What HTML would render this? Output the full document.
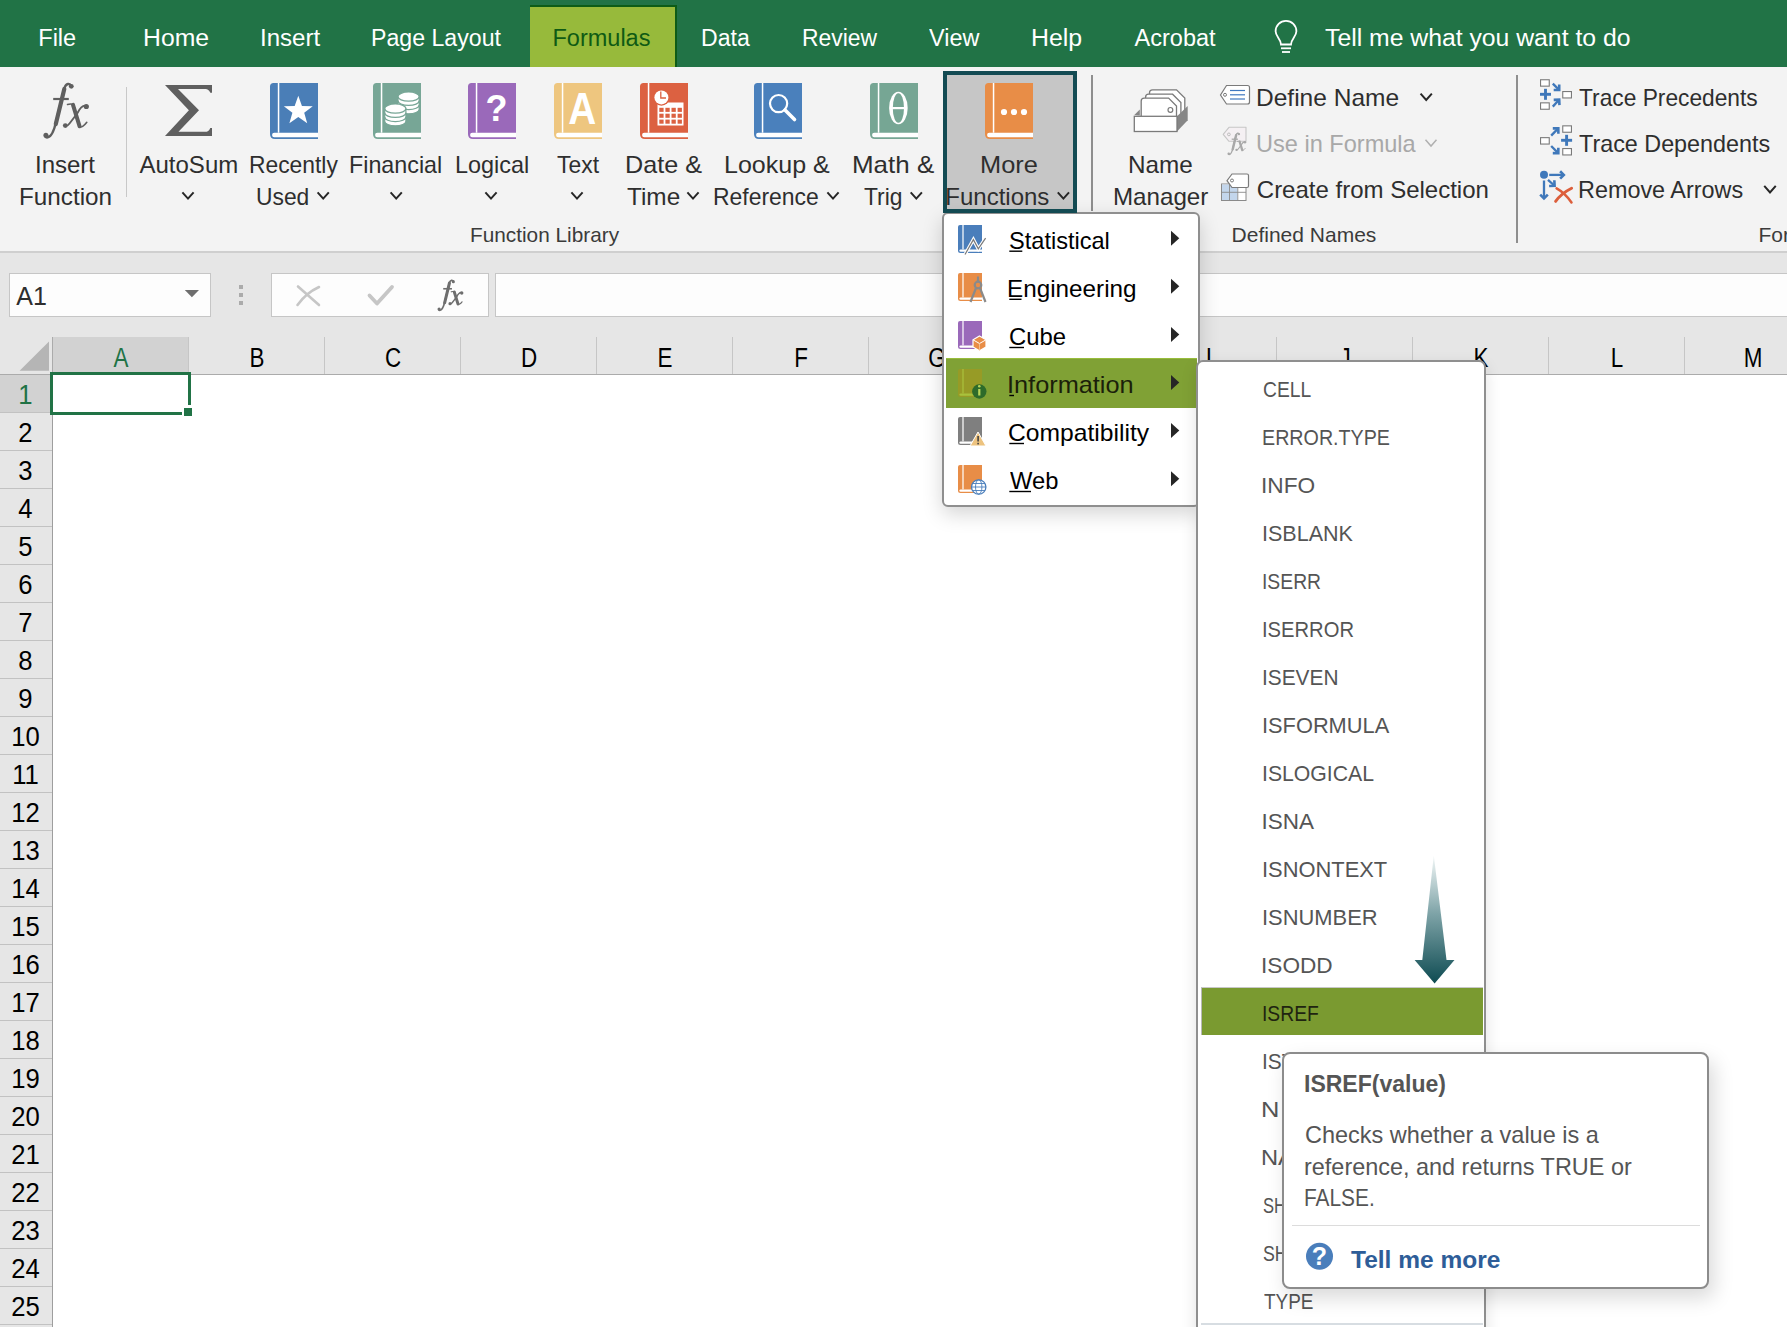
<!DOCTYPE html>
<html><head><meta charset="utf-8"><style>
html,body{margin:0;padding:0;}
body{width:1787px;height:1327px;overflow:hidden;position:relative;background:#fff;font-family:"Liberation Sans",sans-serif;}
.t{position:absolute;white-space:nowrap;line-height:1;transform-origin:0 0;}
.b{position:absolute;}
svg{position:absolute;left:0;top:0;}
</style></head><body>

<div class="b" style="left:0px;top:0px;width:1787px;height:67px;background:#217346;z-index:0;"></div>
<div class="b" style="left:530px;top:5px;width:147px;height:62px;background:#97BA3B;z-index:0;"></div>
<div class="b" style="left:530px;top:5px;width:147px;height:2px;background:#0D5C17;z-index:0;"></div>
<div class="b" style="left:675px;top:5px;width:2px;height:62px;background:#0D5C17;z-index:0;"></div>
<div class="b" style="left:0px;top:67px;width:1787px;height:184px;background:#F3F3F3;z-index:0;"></div>
<div class="b" style="left:0px;top:251px;width:1787px;height:2px;background:#CFCFCF;z-index:0;"></div>
<div class="b" style="left:0px;top:253px;width:1787px;height:121px;background:#E6E6E6;z-index:0;"></div>
<div class="b" style="left:943px;top:71px;width:134px;height:142px;background:#C6C6C6;border:4px solid #134B53;box-sizing:border-box;z-index:0;"></div>
<div class="b" style="left:943px;top:209px;width:134px;height:4px;background:#134B53;z-index:25;"></div>
<div class="b" style="left:125.5px;top:87px;width:1.5px;height:110px;background:#C8C8C8;z-index:0;"></div>
<div class="b" style="left:1091px;top:75px;width:2px;height:136px;background:#8E8E8E;z-index:0;"></div>
<div class="b" style="left:1515.5px;top:75px;width:2px;height:168px;background:#8E8E8E;z-index:0;"></div>
<div class="b" style="left:9px;top:273px;width:202px;height:44px;background:#FDFDFD;border:1px solid #C6C6C6;box-sizing:border-box;z-index:0;"></div>
<div class="b" style="left:271px;top:273px;width:218px;height:44px;background:#FDFDFD;border:1px solid #C6C6C6;box-sizing:border-box;z-index:0;"></div>
<div class="b" style="left:495px;top:273px;width:1294px;height:44px;background:#FDFDFD;border:1px solid #C6C6C6;box-sizing:border-box;z-index:0;"></div>
<div class="b" style="left:239px;top:285px;width:4px;height:4px;background:#ABABAB;z-index:0;"></div>
<div class="b" style="left:239px;top:293px;width:4px;height:4px;background:#ABABAB;z-index:0;"></div>
<div class="b" style="left:239px;top:301px;width:4px;height:4px;background:#ABABAB;z-index:0;"></div>
<div class="b" style="left:52px;top:337px;width:137px;height:37px;background:#D2D2D2;z-index:0;"></div>
<div class="b" style="left:0px;top:374px;width:1787px;height:1px;background:#ABABAB;z-index:0;"></div>
<div class="b" style="left:188px;top:337px;width:1px;height:37px;background:#C6C6C6;z-index:0;"></div>
<div class="b" style="left:324px;top:337px;width:1px;height:37px;background:#C6C6C6;z-index:0;"></div>
<div class="b" style="left:460px;top:337px;width:1px;height:37px;background:#C6C6C6;z-index:0;"></div>
<div class="b" style="left:596px;top:337px;width:1px;height:37px;background:#C6C6C6;z-index:0;"></div>
<div class="b" style="left:732px;top:337px;width:1px;height:37px;background:#C6C6C6;z-index:0;"></div>
<div class="b" style="left:868px;top:337px;width:1px;height:37px;background:#C6C6C6;z-index:0;"></div>
<div class="b" style="left:1004px;top:337px;width:1px;height:37px;background:#C6C6C6;z-index:0;"></div>
<div class="b" style="left:1140px;top:337px;width:1px;height:37px;background:#C6C6C6;z-index:0;"></div>
<div class="b" style="left:1276px;top:337px;width:1px;height:37px;background:#C6C6C6;z-index:0;"></div>
<div class="b" style="left:1412px;top:337px;width:1px;height:37px;background:#C6C6C6;z-index:0;"></div>
<div class="b" style="left:1548px;top:337px;width:1px;height:37px;background:#C6C6C6;z-index:0;"></div>
<div class="b" style="left:1684px;top:337px;width:1px;height:37px;background:#C6C6C6;z-index:0;"></div>
<div class="b" style="left:1820px;top:337px;width:1px;height:37px;background:#C6C6C6;z-index:0;"></div>
<div class="b" style="left:52px;top:337px;width:1px;height:37px;background:#ABABAB;z-index:0;"></div>
<div class="b" style="left:0px;top:375px;width:52px;height:952px;background:#E6E6E6;z-index:0;"></div>
<div class="b" style="left:0px;top:375px;width:52px;height:38px;background:#D2D2D2;z-index:0;"></div>
<div class="b" style="left:52px;top:375px;width:1px;height:952px;background:#9E9E9E;z-index:0;"></div>
<div class="b" style="left:0px;top:412px;width:52px;height:1px;background:#C2C2C2;z-index:0;"></div>
<div class="b" style="left:0px;top:450px;width:52px;height:1px;background:#C2C2C2;z-index:0;"></div>
<div class="b" style="left:0px;top:488px;width:52px;height:1px;background:#C2C2C2;z-index:0;"></div>
<div class="b" style="left:0px;top:526px;width:52px;height:1px;background:#C2C2C2;z-index:0;"></div>
<div class="b" style="left:0px;top:564px;width:52px;height:1px;background:#C2C2C2;z-index:0;"></div>
<div class="b" style="left:0px;top:602px;width:52px;height:1px;background:#C2C2C2;z-index:0;"></div>
<div class="b" style="left:0px;top:640px;width:52px;height:1px;background:#C2C2C2;z-index:0;"></div>
<div class="b" style="left:0px;top:678px;width:52px;height:1px;background:#C2C2C2;z-index:0;"></div>
<div class="b" style="left:0px;top:716px;width:52px;height:1px;background:#C2C2C2;z-index:0;"></div>
<div class="b" style="left:0px;top:754px;width:52px;height:1px;background:#C2C2C2;z-index:0;"></div>
<div class="b" style="left:0px;top:792px;width:52px;height:1px;background:#C2C2C2;z-index:0;"></div>
<div class="b" style="left:0px;top:830px;width:52px;height:1px;background:#C2C2C2;z-index:0;"></div>
<div class="b" style="left:0px;top:868px;width:52px;height:1px;background:#C2C2C2;z-index:0;"></div>
<div class="b" style="left:0px;top:906px;width:52px;height:1px;background:#C2C2C2;z-index:0;"></div>
<div class="b" style="left:0px;top:944px;width:52px;height:1px;background:#C2C2C2;z-index:0;"></div>
<div class="b" style="left:0px;top:982px;width:52px;height:1px;background:#C2C2C2;z-index:0;"></div>
<div class="b" style="left:0px;top:1020px;width:52px;height:1px;background:#C2C2C2;z-index:0;"></div>
<div class="b" style="left:0px;top:1058px;width:52px;height:1px;background:#C2C2C2;z-index:0;"></div>
<div class="b" style="left:0px;top:1096px;width:52px;height:1px;background:#C2C2C2;z-index:0;"></div>
<div class="b" style="left:0px;top:1134px;width:52px;height:1px;background:#C2C2C2;z-index:0;"></div>
<div class="b" style="left:0px;top:1172px;width:52px;height:1px;background:#C2C2C2;z-index:0;"></div>
<div class="b" style="left:0px;top:1210px;width:52px;height:1px;background:#C2C2C2;z-index:0;"></div>
<div class="b" style="left:0px;top:1248px;width:52px;height:1px;background:#C2C2C2;z-index:0;"></div>
<div class="b" style="left:0px;top:1286px;width:52px;height:1px;background:#C2C2C2;z-index:0;"></div>
<div class="b" style="left:0px;top:1324px;width:52px;height:1px;background:#C2C2C2;z-index:0;"></div>
<div class="b" style="left:50px;top:372px;width:141px;height:43px;border:3px solid #217346;box-sizing:border-box;z-index:0;"></div>
<div class="b" style="left:182px;top:405px;width:12px;height:12px;background:#fff;z-index:2;"></div>
<div class="b" style="left:184px;top:407.5px;width:8px;height:8.5px;background:#217346;z-index:3;"></div>
<svg width="1787" height="1327" style="z-index:5"><g fill="none" stroke="#fff" stroke-width="1.8"><path d="M1281,44.5 C1281,39 1275.6,36.5 1275.6,31.3 A10.4,10.4 0 0 1 1296.4,31.3 C1296.4,36.5 1291,39 1291,44.5 Z"/><line x1="1281" y1="48.3" x2="1291" y2="48.3"/><line x1="1282" y1="52" x2="1290" y2="52"/></g><g transform="translate(43,83) scale(1.0)" fill="none" stroke="#5F5F5F" stroke-linecap="round"><path d="M28,3 C27,0 23,0 21.5,5 L13,39 C11,48 8,54.3 4,54.5 C2.5,54.5 1.8,53 2.5,52" stroke-width="2.40"/><path d="M21.3,6 L12.8,41" stroke-width="4.20"/><path d="M10.2,16 L25.8,16" stroke-width="2.20" stroke-linecap="butt"/><path d="M30,21.8 L36.6,43.3" stroke-width="4.00"/><path d="M24.5,21.5 Q28,20.3 31,21.8" stroke-width="1.50"/><path d="M43.5,23 C40,21.5 37,25 34.5,30 L26.5,40.5 C25,42.5 23.5,43.5 22,43" stroke-width="1.90"/><path d="M36.6,43.5 C38,45 41,43 43.8,39.3" stroke-width="1.60"/></g><g transform="translate(43,83) scale(1.0)" fill="#5F5F5F"><circle cx="28.3" cy="3.3" r="2.40"/><circle cx="2.9" cy="52.2" r="2.50"/><circle cx="43.3" cy="23.5" r="2.60"/><circle cx="22.3" cy="42.6" r="2.40"/></g><path d="M165,85 H212 V92.7 H210.3 Q208.5,89.1 205.7,89.1 H178 L199,110.3 L178.5,131.8 H205 Q208.8,131.8 210.3,127.9 H212 V135.9 H165 L188.9,110.3 Z" fill="#5F5F5F"/><path d="M273.5,83 H318 V139 H275 Q270,139 270,134 V86.5 Q270,83 273.5,83 Z" fill="#4A7EB7"/><rect x="277.8" y="83" width="1.5" height="49.7" fill="#fff"/><path d="M274.3,132.7 H318 V137.2 H274.3 A2.25,2.25 0 0 1 274.3,132.7 Z" fill="#fff"/><polygon points="298.30,95.70 301.94,105.88 312.76,106.20 304.20,112.82 307.23,123.20 298.30,117.10 289.37,123.20 292.40,112.82 283.84,106.20 294.66,105.88" fill="#fff"/><path d="M376.5,83 H421 V139 H378 Q373,139 373,134 V86.5 Q373,83 376.5,83 Z" fill="#77A696"/><rect x="380.8" y="83" width="1.5" height="49.7" fill="#fff"/><path d="M377.3,132.7 H421 V137.2 H377.3 A2.25,2.25 0 0 1 377.3,132.7 Z" fill="#fff"/><path d="M398.0,96.6 V109.19999999999999 A10.6,4.6 0 0 0 419.20000000000005,109.19999999999999 V96.6 A10.6,4.6 0 0 0 398.0,96.6 Z" fill="#fff" stroke="#77A696" stroke-width="1.2"/><path d="M398.0,96.6 A10.6,4.6 0 0 0 419.20000000000005,96.6" fill="none" stroke="#77A696" stroke-width="1.3"/><path d="M398.0,100.8 A10.6,4.6 0 0 0 419.20000000000005,100.8" fill="none" stroke="#77A696" stroke-width="1.3"/><path d="M398.0,105.0 A10.6,4.6 0 0 0 419.20000000000005,105.0" fill="none" stroke="#77A696" stroke-width="1.3"/><path d="M384.7,108.6 V121.19999999999999 A10.6,4.6 0 0 0 405.90000000000003,121.19999999999999 V108.6 A10.6,4.6 0 0 0 384.7,108.6 Z" fill="#fff" stroke="#77A696" stroke-width="1.2"/><path d="M384.7,108.6 A10.6,4.6 0 0 0 405.90000000000003,108.6" fill="none" stroke="#77A696" stroke-width="1.3"/><path d="M384.7,112.8 A10.6,4.6 0 0 0 405.90000000000003,112.8" fill="none" stroke="#77A696" stroke-width="1.3"/><path d="M384.7,117.0 A10.6,4.6 0 0 0 405.90000000000003,117.0" fill="none" stroke="#77A696" stroke-width="1.3"/><path d="M471.5,83 H516 V139 H473 Q468,139 468,134 V86.5 Q468,83 471.5,83 Z" fill="#9A69BA"/><rect x="475.8" y="83" width="1.5" height="49.7" fill="#fff"/><path d="M472.3,132.7 H516 V137.2 H472.3 A2.25,2.25 0 0 1 472.3,132.7 Z" fill="#fff"/><text x="496.5" y="121" font-family="Liberation Sans" font-weight="700" font-size="36" fill="#fff" text-anchor="middle">?</text><path d="M557.5,83 H602 V139 H559 Q554,139 554,134 V86.5 Q554,83 557.5,83 Z" fill="#EEC67F"/><rect x="561.8" y="83" width="1.5" height="49.7" fill="#fff"/><path d="M558.3,132.7 H602 V137.2 H558.3 A2.25,2.25 0 0 1 558.3,132.7 Z" fill="#fff"/><text x="582.2" y="123.5" font-family="Liberation Sans" font-weight="700" font-size="44" fill="#fff" text-anchor="middle" textLength="28" lengthAdjust="spacingAndGlyphs">A</text><path d="M643.5,83 H688 V139 H645 Q640,139 640,134 V86.5 Q640,83 643.5,83 Z" fill="#DC6141"/><rect x="647.8" y="83" width="1.5" height="49.7" fill="#fff"/><path d="M644.3,132.7 H688 V137.2 H644.3 A2.25,2.25 0 0 1 644.3,132.7 Z" fill="#fff"/><rect x="657.5" y="102.5" width="26" height="23" fill="#fff"/><rect x="659.3" y="107.8" width="4.3" height="4.1" fill="#DC6141"/><rect x="659.3" y="113.7" width="4.3" height="4.1" fill="#DC6141"/><rect x="659.3" y="119.6" width="4.3" height="4.1" fill="#DC6141"/><rect x="665.4" y="107.8" width="4.3" height="4.1" fill="#DC6141"/><rect x="665.4" y="113.7" width="4.3" height="4.1" fill="#DC6141"/><rect x="665.4" y="119.6" width="4.3" height="4.1" fill="#DC6141"/><rect x="671.5" y="107.8" width="4.3" height="4.1" fill="#DC6141"/><rect x="671.5" y="113.7" width="4.3" height="4.1" fill="#DC6141"/><rect x="671.5" y="119.6" width="4.3" height="4.1" fill="#DC6141"/><rect x="677.5999999999999" y="107.8" width="4.3" height="4.1" fill="#DC6141"/><rect x="677.5999999999999" y="113.7" width="4.3" height="4.1" fill="#DC6141"/><rect x="677.5999999999999" y="119.6" width="4.3" height="4.1" fill="#DC6141"/><circle cx="661.4" cy="97.4" r="8.3" fill="#DC6141"/><circle cx="661.4" cy="97.4" r="7" fill="#fff"/><polyline points="660.8,91.5 660.8,98 666,98" fill="none" stroke="#DC6141" stroke-width="1.3"/><path d="M757.5,83 H802 V139 H759 Q754,139 754,134 V86.5 Q754,83 757.5,83 Z" fill="#4A80BC"/><rect x="761.8" y="83" width="1.5" height="49.7" fill="#fff"/><path d="M758.3,132.7 H802 V137.2 H758.3 A2.25,2.25 0 0 1 758.3,132.7 Z" fill="#fff"/><circle cx="778.6" cy="103.6" r="8.6" fill="none" stroke="#fff" stroke-width="2.2"/><line x1="785" y1="110" x2="794.5" y2="119.5" stroke="#fff" stroke-width="3.6" stroke-linecap="round"/><path d="M873.5,83 H918 V139 H875 Q870,139 870,134 V86.5 Q870,83 873.5,83 Z" fill="#76A694"/><rect x="877.8" y="83" width="1.5" height="49.7" fill="#fff"/><path d="M874.3,132.7 H918 V137.2 H874.3 A2.25,2.25 0 0 1 874.3,132.7 Z" fill="#fff"/><ellipse cx="898.4" cy="108" rx="9.3" ry="16.3" fill="#fff"/><ellipse cx="898.4" cy="108" rx="5.6" ry="14.8" fill="#76A694"/><rect x="892" y="107" width="13" height="2.2" fill="#fff"/><path d="M988.5,83 H1033 V139 H990 Q985,139 985,134 V86.5 Q985,83 988.5,83 Z" fill="#E88D47"/><rect x="992.8" y="83" width="1.5" height="49.7" fill="#fff"/><path d="M989.3,132.7 H1033 V137.2 H989.3 A2.25,2.25 0 0 1 989.3,132.7 Z" fill="#fff"/><circle cx="1004" cy="112" r="3.1" fill="#fff"/><circle cx="1014" cy="112" r="3.1" fill="#fff"/><circle cx="1024" cy="112" r="3.1" fill="#fff"/><polyline points="182.4,192.4 188,198.6 193.6,192.4" fill="none" stroke="#262626" stroke-width="2.0"/><polyline points="317.59999999999997,192.4 323.2,198.6 328.8,192.4" fill="none" stroke="#262626" stroke-width="2.0"/><polyline points="390.59999999999997,192.4 396.2,198.6 401.8,192.4" fill="none" stroke="#262626" stroke-width="2.0"/><polyline points="485.4,192.4 491,198.6 496.6,192.4" fill="none" stroke="#262626" stroke-width="2.0"/><polyline points="571.4,192.4 577,198.6 582.6,192.4" fill="none" stroke="#262626" stroke-width="2.0"/><polyline points="687.4,192.4 693,198.6 698.6,192.4" fill="none" stroke="#262626" stroke-width="2.0"/><polyline points="827.4,192.4 833,198.6 838.6,192.4" fill="none" stroke="#262626" stroke-width="2.0"/><polyline points="910.6999999999999,192.4 916.3,198.6 921.9,192.4" fill="none" stroke="#262626" stroke-width="2.0"/><polyline points="1057.8000000000002,192.4 1063.4,198.6 1069.0,192.4" fill="none" stroke="#262626" stroke-width="2.0"/><polyline points="1420.55,93.7 1426.2,99.89999999999999 1431.8500000000001,93.7" fill="none" stroke="#262626" stroke-width="2.0"/><polyline points="1425.5,139.8 1431,146.0 1436.5,139.8" fill="none" stroke="#B0B0B0" stroke-width="1.5"/><polyline points="1764.25,185.95 1770,192.45 1775.75,185.95" fill="none" stroke="#262626" stroke-width="2.0"/><path d="M1149.5,113 V92.8 Q1149.5,89.8 1152.5,89.8 H1176.5 L1184.8,98.1 V113" fill="#fff" stroke="#7A7A7A" stroke-width="1.3"/><path d="M1145.6,116 V97.2 Q1145.6,94.2 1148.6,94.2 H1172.6000000000001 L1180.9,102.5 V116" fill="#fff" stroke="#7A7A7A" stroke-width="1.3"/><path d="M1141.2,118 V101.1 Q1141.2,98.1 1144.2,98.1 H1168.6 L1176.5,106.0 V118" fill="#fff" stroke="#7A7A7A" stroke-width="1.3"/><circle cx="1170.4" cy="109.9" r="2.4" fill="none" stroke="#7A7A7A" stroke-width="1.2"/><polygon points="1134.3,115 1139.8,109.4 1139.8,115.6" fill="#868686"/><polygon points="1177,116.3 1187.7,106 1187.7,120.2 1177,131.5" fill="#868686"/><rect x="1134.3" y="116.3" width="42.7" height="15.2" fill="#fff" stroke="#7A7A7A" stroke-width="1.3"/><path d="M1226.5,85.5 H1247.5 Q1249.5,85.5 1249.5,87.5 V102 Q1249.5,104 1247.5,104 H1226.5 L1220.5,95 Z" fill="#fff" stroke="#7A7A7A" stroke-width="1.2"/><circle cx="1225" cy="94.8" r="1.5" fill="none" stroke="#7A7A7A" stroke-width="1"/><g stroke="#3F78C0" stroke-width="1.2"><line x1="1230" y1="90.5" x2="1245" y2="90.5"/><line x1="1230" y1="94.8" x2="1245" y2="94.8"/><line x1="1230" y1="99" x2="1245" y2="99"/></g><path d="M1229,127.3 H1246 V141.3 H1229 L1223.2,134.3 Z" fill="#F5F0F3" stroke="#C6C6C6" stroke-width="1.1" stroke-linejoin="round"/><circle cx="1228.9" cy="134.4" r="1.4" fill="none" stroke="#BDBDBD" stroke-width="1"/><g transform="translate(1227.6,132.8) scale(0.4)" fill="none" stroke="#A8A8A8" stroke-linecap="round"><path d="M28,3 C27,0 23,0 21.5,5 L13,39 C11,48 8,54.3 4,54.5 C2.5,54.5 1.8,53 2.5,52" stroke-width="3.48"/><path d="M21.3,6 L12.8,41" stroke-width="6.09"/><path d="M10.2,16 L25.8,16" stroke-width="3.19" stroke-linecap="butt"/><path d="M30,21.8 L36.6,43.3" stroke-width="5.80"/><path d="M24.5,21.5 Q28,20.3 31,21.8" stroke-width="2.17"/><path d="M43.5,23 C40,21.5 37,25 34.5,30 L26.5,40.5 C25,42.5 23.5,43.5 22,43" stroke-width="2.75"/><path d="M36.6,43.5 C38,45 41,43 43.8,39.3" stroke-width="2.32"/></g><g transform="translate(1227.6,132.8) scale(0.4)" fill="#A8A8A8"><circle cx="28.3" cy="3.3" r="2.94"/><circle cx="2.9" cy="52.2" r="3.06"/><circle cx="43.3" cy="23.5" r="3.19"/><circle cx="22.3" cy="42.6" r="2.94"/></g><rect x="1221.5" y="184" width="24.5" height="16.5" fill="#fff" stroke="#8A8A8A" stroke-width="1"/><rect x="1222" y="184.5" width="15.5" height="15.5" fill="#C3D6EC"/><g stroke="#8A8A8A" stroke-width="0.9"><line x1="1221.5" y1="192.3" x2="1246" y2="192.3"/><line x1="1229.5" y1="184" x2="1229.5" y2="200.5"/><line x1="1237.8" y1="184" x2="1237.8" y2="200.5"/></g><path d="M1232,174 H1247 Q1248.5,174 1248.5,175.5 V186 Q1248.5,187.5 1247,187.5 H1232 L1227,180.7 Z" fill="#fff" stroke="#7A7A7A" stroke-width="1.2"/><circle cx="1232" cy="180.5" r="1.5" fill="none" stroke="#7A7A7A" stroke-width="1"/><rect x="1540.55" y="79.75" width="8.7" height="6.4" fill="#fff" stroke="#7A7A7A" stroke-width="1.1"/><rect x="1540.55" y="102.85" width="8.7" height="6.4" fill="#fff" stroke="#7A7A7A" stroke-width="1.1"/><rect x="1562.75" y="91.55" width="8.7" height="6.4" fill="#fff" stroke="#7A7A7A" stroke-width="1.1"/><rect x="1540.0" y="92.85" width="11" height="2.9" fill="#3F78BA"/><rect x="1544.05" y="88.8" width="2.9" height="11" fill="#3F78BA"/><line x1="1552.8" y1="83.6" x2="1558.35" y2="89.15" stroke="#3F78BA" stroke-width="2.3"/><polyline points="1553.70,90.00 1559.2,90 1559.20,84.50" fill="none" stroke="#3F78BA" stroke-width="2.5999999999999996" stroke-linejoin="miter"/><line x1="1552.8" y1="106.6" x2="1558.39" y2="100.49" stroke="#3F78BA" stroke-width="2.3"/><polyline points="1559.45,105.09 1559.2,99.6 1553.71,99.85" fill="none" stroke="#3F78BA" stroke-width="2.5999999999999996" stroke-linejoin="miter"/><rect x="1562.75" y="125.85" width="8.7" height="6.4" fill="#fff" stroke="#7A7A7A" stroke-width="1.1"/><rect x="1540.55" y="137.65" width="8.7" height="6.4" fill="#fff" stroke="#7A7A7A" stroke-width="1.1"/><rect x="1562.75" y="148.55" width="8.7" height="6.4" fill="#fff" stroke="#7A7A7A" stroke-width="1.1"/><rect x="1561.1" y="138.85000000000002" width="11" height="2.9" fill="#3F78BA"/><rect x="1565.1499999999999" y="134.8" width="2.9" height="11" fill="#3F78BA"/><line x1="1551.2" y1="135.6" x2="1557.46" y2="129.16" stroke="#3F78BA" stroke-width="2.3"/><polyline points="1558.38,133.80 1558.3,128.3 1552.80,128.38" fill="none" stroke="#3F78BA" stroke-width="2.5999999999999996" stroke-linejoin="miter"/><line x1="1551.2" y1="146" x2="1557.46" y2="152.35" stroke="#3F78BA" stroke-width="2.3"/><polyline points="1552.80,153.16 1558.3,153.2 1558.34,147.70" fill="none" stroke="#3F78BA" stroke-width="2.5999999999999996" stroke-linejoin="miter"/><circle cx="1544" cy="174.8" r="4" fill="#3F78BA"/><line x1="1549.2" y1="174.9" x2="1562.60" y2="174.90" stroke="#3F78BA" stroke-width="2.3"/><polyline points="1560.12,178.58 1563.8,174.9 1560.12,171.22" fill="none" stroke="#3F78BA" stroke-width="2.5999999999999996" stroke-linejoin="miter"/><line x1="1544" y1="180.5" x2="1544.00" y2="197.20" stroke="#3F78BA" stroke-width="2.3"/><polyline points="1540.18,194.58 1544,198.4 1547.82,194.58" fill="none" stroke="#3F78BA" stroke-width="2.5999999999999996" stroke-linejoin="miter"/><line x1="1548" y1="179.8" x2="1553.71" y2="184.99" stroke="#3F78BA" stroke-width="2.3"/><polyline points="1549.11,186.06 1554.6,185.8 1554.34,180.31" fill="none" stroke="#3F78BA" stroke-width="2.5999999999999996" stroke-linejoin="miter"/><g stroke="#DC5F3C" stroke-linecap="round" fill="none"><path d="M1556.6,188.4 Q1565,193 1571.5,202.5" stroke-width="2.5"/><path d="M1555.6,201.4 Q1561,193.5 1571.6,188.2" stroke-width="2.9"/></g><polygon points="1388,0 0,0" fill="none"/><polygon points="184.8,289.9 199,289.9 191.9,297.2" fill="#6E6E6E"/><g stroke="#C6C6C6" stroke-width="2.6" stroke-linecap="round" fill="none"><path d="M297.5,305 Q306,293 319,287"/><line x1="298" y1="286.5" x2="319" y2="305"/></g><polyline points="369.5,295.5 377,303.5 392,287" fill="none" stroke="#C6C6C6" stroke-width="3.8" stroke-linecap="round" stroke-linejoin="round"/><g transform="translate(437.5,279.8) scale(0.56)" fill="none" stroke="#6E6E6E" stroke-linecap="round"><path d="M28,3 C27,0 23,0 21.5,5 L13,39 C11,48 8,54.3 4,54.5 C2.5,54.5 1.8,53 2.5,52" stroke-width="3.12"/><path d="M21.3,6 L12.8,41" stroke-width="5.46"/><path d="M10.2,16 L25.8,16" stroke-width="2.86" stroke-linecap="butt"/><path d="M30,21.8 L36.6,43.3" stroke-width="5.20"/><path d="M24.5,21.5 Q28,20.3 31,21.8" stroke-width="1.95"/><path d="M43.5,23 C40,21.5 37,25 34.5,30 L26.5,40.5 C25,42.5 23.5,43.5 22,43" stroke-width="2.47"/><path d="M36.6,43.5 C38,45 41,43 43.8,39.3" stroke-width="2.08"/></g><g transform="translate(437.5,279.8) scale(0.56)" fill="#6E6E6E"><circle cx="28.3" cy="3.3" r="2.76"/><circle cx="2.9" cy="52.2" r="2.88"/><circle cx="43.3" cy="23.5" r="2.99"/><circle cx="22.3" cy="42.6" r="2.76"/></g><polygon points="49,341.5 49,370.8 19.6,370.8" fill="#B5B5B5"/></svg>
<div class="t" style="left:38.31px;top:27.00px;font-size:23.5px;color:#ffffff;font-weight:400;z-index:1;">File</div>
<div class="t" style="left:142.69px;top:27.00px;font-size:23.5px;color:#ffffff;font-weight:400;z-index:1;transform:scaleX(1.0533);">Home</div>
<div class="t" style="left:259.55px;top:27.00px;font-size:23.5px;color:#ffffff;font-weight:400;z-index:1;transform:scaleX(1.0246);">Insert</div>
<div class="t" style="left:371.03px;top:27.00px;font-size:23.5px;color:#ffffff;font-weight:400;z-index:1;transform:scaleX(0.9846);">Page Layout</div>
<div class="t" style="left:701.14px;top:27.00px;font-size:23.5px;color:#ffffff;font-weight:400;z-index:1;transform:scaleX(0.9813);">Data</div>
<div class="t" style="left:802.05px;top:27.00px;font-size:23.5px;color:#ffffff;font-weight:400;z-index:1;transform:scaleX(0.9733);">Review</div>
<div class="t" style="left:929.30px;top:27.00px;font-size:23.5px;color:#ffffff;font-weight:400;z-index:1;transform:scaleX(0.9961);">View</div>
<div class="t" style="left:1030.88px;top:27.00px;font-size:23.5px;color:#ffffff;font-weight:400;z-index:1;transform:scaleX(1.0587);">Help</div>
<div class="t" style="left:1134.60px;top:27.00px;font-size:23.5px;color:#ffffff;font-weight:400;z-index:1;">Acrobat</div>
<div class="t" style="left:1325.00px;top:27.00px;font-size:23.5px;color:#ffffff;font-weight:400;z-index:1;transform:scaleX(1.0533);">Tell me what you want to do</div>
<div class="t" style="left:552.50px;top:27.00px;font-size:23.5px;color:#0F5A14;font-weight:400;z-index:1;">Formulas</div>
<div class="t" style="left:35.00px;top:153.00px;font-size:24px;color:#2e2e2e;font-weight:400;z-index:1;">Insert</div>
<div class="t" style="left:18.58px;top:185.00px;font-size:24px;color:#2e2e2e;font-weight:400;z-index:1;transform:scaleX(1.0101);">Function</div>
<div class="t" style="left:139.50px;top:153.00px;font-size:24px;color:#2e2e2e;font-weight:400;z-index:1;">AutoSum</div>
<div class="t" style="left:248.60px;top:153.00px;font-size:24px;color:#2e2e2e;font-weight:400;z-index:1;transform:scaleX(0.9511);">Recently</div>
<div class="t" style="left:255.60px;top:185.00px;font-size:24px;color:#2e2e2e;font-weight:400;z-index:1;transform:scaleX(0.9509);">Used</div>
<div class="t" style="left:349.26px;top:153.00px;font-size:24px;color:#2e2e2e;font-weight:400;z-index:1;transform:scaleX(0.9710);">Financial</div>
<div class="t" style="left:454.55px;top:153.00px;font-size:24px;color:#2e2e2e;font-weight:400;z-index:1;transform:scaleX(0.9753);">Logical</div>
<div class="t" style="left:556.70px;top:153.00px;font-size:24px;color:#2e2e2e;font-weight:400;z-index:1;transform:scaleX(0.9545);">Text</div>
<div class="t" style="left:625.10px;top:153.00px;font-size:24px;color:#2e2e2e;font-weight:400;z-index:1;transform:scaleX(1.0493);">Date &amp;</div>
<div class="t" style="left:626.50px;top:185.00px;font-size:24px;color:#2e2e2e;font-weight:400;z-index:1;transform:scaleX(1.0137);">Time</div>
<div class="t" style="left:724.11px;top:153.00px;font-size:24px;color:#2e2e2e;font-weight:400;z-index:1;transform:scaleX(1.0434);">Lookup &amp;</div>
<div class="t" style="left:712.59px;top:185.00px;font-size:24px;color:#2e2e2e;font-weight:400;z-index:1;transform:scaleX(0.9546);">Reference</div>
<div class="t" style="left:852.34px;top:153.00px;font-size:24px;color:#2e2e2e;font-weight:400;z-index:1;transform:scaleX(1.0811);">Math &amp;</div>
<div class="t" style="left:863.70px;top:185.00px;font-size:24px;color:#2e2e2e;font-weight:400;z-index:1;transform:scaleX(0.9513);">Trig</div>
<div class="t" style="left:980.18px;top:153.00px;font-size:24px;color:#2e2e2e;font-weight:400;z-index:1;transform:scaleX(1.0577);">More</div>
<div class="t" style="left:945.30px;top:185.00px;font-size:24px;color:#2e2e2e;font-weight:400;z-index:1;">Functions</div>
<div class="t" style="left:1128.48px;top:153.00px;font-size:24px;color:#2e2e2e;font-weight:400;z-index:1;transform:scaleX(1.0115);">Name</div>
<div class="t" style="left:1112.59px;top:185.00px;font-size:24px;color:#2e2e2e;font-weight:400;z-index:1;transform:scaleX(1.0065);">Manager</div>
<div class="t" style="left:1256.06px;top:86.00px;font-size:24px;color:#2e2e2e;font-weight:400;z-index:1;transform:scaleX(1.0219);">Define Name</div>
<div class="t" style="left:1256.80px;top:178.00px;font-size:24px;color:#2e2e2e;font-weight:400;z-index:1;">Create from Selection</div>
<div class="t" style="left:1578.60px;top:86.00px;font-size:24px;color:#2e2e2e;font-weight:400;z-index:1;transform:scaleX(0.9479);">Trace Precedents</div>
<div class="t" style="left:1578.60px;top:132.00px;font-size:24px;color:#2e2e2e;font-weight:400;z-index:1;transform:scaleX(0.9724);">Trace Dependents</div>
<div class="t" style="left:1577.55px;top:178.00px;font-size:24px;color:#2e2e2e;font-weight:400;z-index:1;transform:scaleX(0.9749);">Remove Arrows</div>
<div class="t" style="left:1256.14px;top:132.00px;font-size:24px;color:#A8A8A8;font-weight:400;z-index:1;transform:scaleX(0.9814);">Use in Formula</div>
<div class="t" style="left:470.12px;top:224.00px;font-size:21px;color:#3b3b3b;font-weight:400;z-index:1;transform:scaleX(0.9899);">Function Library</div>
<div class="t" style="left:1231.60px;top:224.00px;font-size:21px;color:#3b3b3b;font-weight:400;z-index:1;">Defined Names</div>
<div class="t" style="left:1758.50px;top:224.00px;font-size:21px;color:#3b3b3b;font-weight:400;z-index:1;">Formula Auditing</div>
<div class="t" style="left:16.30px;top:284.00px;font-size:25px;color:#2e2e2e;font-weight:400;z-index:1;">A1</div>
<div class="t" style="left:70.6px;width:100px;text-align:center;top:345.34px;font-size:27px;color:#217346;z-index:6;transform:scaleX(0.83);transform-origin:50% 0">A</div>
<div class="t" style="left:206.60000000000002px;width:100px;text-align:center;top:345.34px;font-size:27px;color:#000;z-index:6;transform:scaleX(0.83);transform-origin:50% 0">B</div>
<div class="t" style="left:342.6px;width:100px;text-align:center;top:345.34px;font-size:27px;color:#000;z-index:6;transform:scaleX(0.83);transform-origin:50% 0">C</div>
<div class="t" style="left:478.6px;width:100px;text-align:center;top:345.34px;font-size:27px;color:#000;z-index:6;transform:scaleX(0.83);transform-origin:50% 0">D</div>
<div class="t" style="left:614.6px;width:100px;text-align:center;top:345.34px;font-size:27px;color:#000;z-index:6;transform:scaleX(0.83);transform-origin:50% 0">E</div>
<div class="t" style="left:750.6px;width:100px;text-align:center;top:345.34px;font-size:27px;color:#000;z-index:6;transform:scaleX(0.83);transform-origin:50% 0">F</div>
<div class="t" style="left:886.6px;width:100px;text-align:center;top:345.34px;font-size:27px;color:#000;z-index:6;transform:scaleX(0.83);transform-origin:50% 0">G</div>
<div class="t" style="left:1022.5999999999999px;width:100px;text-align:center;top:345.34px;font-size:27px;color:#000;z-index:6;transform:scaleX(0.83);transform-origin:50% 0">H</div>
<div class="t" style="left:1158.6px;width:100px;text-align:center;top:345.34px;font-size:27px;color:#000;z-index:6;transform:scaleX(0.83);transform-origin:50% 0">I</div>
<div class="t" style="left:1294.6px;width:100px;text-align:center;top:345.34px;font-size:27px;color:#000;z-index:6;transform:scaleX(0.83);transform-origin:50% 0">J</div>
<div class="t" style="left:1430.6px;width:100px;text-align:center;top:345.34px;font-size:27px;color:#000;z-index:6;transform:scaleX(0.83);transform-origin:50% 0">K</div>
<div class="t" style="left:1566.6px;width:100px;text-align:center;top:345.34px;font-size:27px;color:#000;z-index:6;transform:scaleX(0.83);transform-origin:50% 0">L</div>
<div class="t" style="left:1702.6px;width:100px;text-align:center;top:345.34px;font-size:27px;color:#000;z-index:6;transform:scaleX(0.83);transform-origin:50% 0">M</div>
<div class="t" style="left:0px;width:51px;text-align:center;top:382.14px;font-size:27px;color:#217346;z-index:6;transform:scaleX(0.95);transform-origin:50% 0">1</div>
<div class="t" style="left:0px;width:51px;text-align:center;top:420.14px;font-size:27px;color:#000;z-index:6;transform:scaleX(0.95);transform-origin:50% 0">2</div>
<div class="t" style="left:0px;width:51px;text-align:center;top:458.14px;font-size:27px;color:#000;z-index:6;transform:scaleX(0.95);transform-origin:50% 0">3</div>
<div class="t" style="left:0px;width:51px;text-align:center;top:496.14px;font-size:27px;color:#000;z-index:6;transform:scaleX(0.95);transform-origin:50% 0">4</div>
<div class="t" style="left:0px;width:51px;text-align:center;top:534.14px;font-size:27px;color:#000;z-index:6;transform:scaleX(0.95);transform-origin:50% 0">5</div>
<div class="t" style="left:0px;width:51px;text-align:center;top:572.14px;font-size:27px;color:#000;z-index:6;transform:scaleX(0.95);transform-origin:50% 0">6</div>
<div class="t" style="left:0px;width:51px;text-align:center;top:610.14px;font-size:27px;color:#000;z-index:6;transform:scaleX(0.95);transform-origin:50% 0">7</div>
<div class="t" style="left:0px;width:51px;text-align:center;top:648.14px;font-size:27px;color:#000;z-index:6;transform:scaleX(0.95);transform-origin:50% 0">8</div>
<div class="t" style="left:0px;width:51px;text-align:center;top:686.14px;font-size:27px;color:#000;z-index:6;transform:scaleX(0.95);transform-origin:50% 0">9</div>
<div class="t" style="left:0px;width:51px;text-align:center;top:724.14px;font-size:27px;color:#000;z-index:6;transform:scaleX(0.95);transform-origin:50% 0">10</div>
<div class="t" style="left:0px;width:51px;text-align:center;top:762.14px;font-size:27px;color:#000;z-index:6;transform:scaleX(0.95);transform-origin:50% 0">11</div>
<div class="t" style="left:0px;width:51px;text-align:center;top:800.14px;font-size:27px;color:#000;z-index:6;transform:scaleX(0.95);transform-origin:50% 0">12</div>
<div class="t" style="left:0px;width:51px;text-align:center;top:838.14px;font-size:27px;color:#000;z-index:6;transform:scaleX(0.95);transform-origin:50% 0">13</div>
<div class="t" style="left:0px;width:51px;text-align:center;top:876.14px;font-size:27px;color:#000;z-index:6;transform:scaleX(0.95);transform-origin:50% 0">14</div>
<div class="t" style="left:0px;width:51px;text-align:center;top:914.14px;font-size:27px;color:#000;z-index:6;transform:scaleX(0.95);transform-origin:50% 0">15</div>
<div class="t" style="left:0px;width:51px;text-align:center;top:952.14px;font-size:27px;color:#000;z-index:6;transform:scaleX(0.95);transform-origin:50% 0">16</div>
<div class="t" style="left:0px;width:51px;text-align:center;top:990.14px;font-size:27px;color:#000;z-index:6;transform:scaleX(0.95);transform-origin:50% 0">17</div>
<div class="t" style="left:0px;width:51px;text-align:center;top:1028.14px;font-size:27px;color:#000;z-index:6;transform:scaleX(0.95);transform-origin:50% 0">18</div>
<div class="t" style="left:0px;width:51px;text-align:center;top:1066.14px;font-size:27px;color:#000;z-index:6;transform:scaleX(0.95);transform-origin:50% 0">19</div>
<div class="t" style="left:0px;width:51px;text-align:center;top:1104.14px;font-size:27px;color:#000;z-index:6;transform:scaleX(0.95);transform-origin:50% 0">20</div>
<div class="t" style="left:0px;width:51px;text-align:center;top:1142.14px;font-size:27px;color:#000;z-index:6;transform:scaleX(0.95);transform-origin:50% 0">21</div>
<div class="t" style="left:0px;width:51px;text-align:center;top:1180.14px;font-size:27px;color:#000;z-index:6;transform:scaleX(0.95);transform-origin:50% 0">22</div>
<div class="t" style="left:0px;width:51px;text-align:center;top:1218.14px;font-size:27px;color:#000;z-index:6;transform:scaleX(0.95);transform-origin:50% 0">23</div>
<div class="t" style="left:0px;width:51px;text-align:center;top:1256.14px;font-size:27px;color:#000;z-index:6;transform:scaleX(0.95);transform-origin:50% 0">24</div>
<div class="t" style="left:0px;width:51px;text-align:center;top:1294.14px;font-size:27px;color:#000;z-index:6;transform:scaleX(0.95);transform-origin:50% 0">25</div>
<div class="t" style="left:0px;width:51px;text-align:center;top:1332.14px;font-size:27px;color:#000;z-index:6;transform:scaleX(0.95);transform-origin:50% 0">26</div>
<div class="b" style="left:942px;top:211.5px;width:258px;height:295px;background:#fff;border:2px solid #8F8F8F;border-radius:6px;box-sizing:border-box;box-shadow:0 7px 20px rgba(0,0,0,0.17);z-index:20"></div>
<div class="b" style="left:946px;top:358.3px;width:250.8px;height:49.7px;background:#80A135;border-top:1px solid #98BD3C;box-sizing:border-box;z-index:21"></div>
<svg width="1787" height="1327" style="z-index:22"><path d="M960,225 H982 V253 H960.5 Q958,253 958,250.5 V227 Q958,225 960,225 Z" fill="#4A7EBB"/><rect x="962.4" y="225" width="1.2" height="24.4" fill="#fff"/><path d="M960.6,249.4 H982 V251.8 H960.6 A1.2,1.2 0 0 1 960.6,249.4 Z" fill="#fff"/><polyline points="965,254.5 973.4,239.6 978.3,248.9 985.6,238.1" fill="none" stroke="#fff" stroke-width="3.4"/><polyline points="965,254.5 973.4,239.6 978.3,248.9 985.6,238.1" fill="none" stroke="#7A7A7A" stroke-width="1.2"/><path d="M960,273 H982 V301 H960.5 Q958,301 958,298.5 V275 Q958,273 960,273 Z" fill="#E88D47"/><rect x="962.4" y="273" width="1.2" height="24.4" fill="#fff"/><path d="M960.6,297.4 H982 V299.8 H960.6 A1.2,1.2 0 0 1 960.6,297.4 Z" fill="#fff"/><g stroke="#8A8A8A" fill="none"><circle cx="978" cy="285" r="3.3" stroke-width="2.2"/><line x1="976" y1="288" x2="970.5" y2="302" stroke-width="2.2"/><line x1="980" y1="288" x2="985.5" y2="302" stroke-width="2.2"/><line x1="978" y1="276.5" x2="978" y2="281.5" stroke-width="2.2"/></g><path d="M960,321 H982 V349 H960.5 Q958,349 958,346.5 V323 Q958,321 960,321 Z" fill="#9A69BA"/><rect x="962.4" y="321" width="1.2" height="24.4" fill="#fff"/><path d="M960.6,345.4 H982 V347.8 H960.6 A1.2,1.2 0 0 1 960.6,345.4 Z" fill="#fff"/><polygon points="979.5,336 986,339.8 986,347 979.5,350.8 973,347 973,339.8" fill="#E88D47" stroke="#fff" stroke-width="1.2"/><polyline points="973,339.8 979.5,343.5 986,339.8" fill="none" stroke="#fff" stroke-width="1"/><line x1="979.5" y1="343.5" x2="979.5" y2="350.8" stroke="#F6C9A0" stroke-width="0.8"/><path d="M960,369 H982 V397 H960.5 Q958,397 958,394.5 V371 Q958,369 960,369 Z" fill="#979B26"/><rect x="962.4" y="369" width="1.2" height="24.4" fill="#A9C23C"/><path d="M960.6,393.4 H982 V395.8 H960.6 A1.2,1.2 0 0 1 960.6,393.4 Z" fill="#A9C23C"/><circle cx="979.3" cy="391.5" r="7.2" fill="#2D6B2A"/><rect x="978.2" y="389" width="2.2" height="6.5" fill="#B9D65A"/><circle cx="979.3" cy="386.3" r="1.3" fill="#B9D65A"/><path d="M960,417 H982 V445 H960.5 Q958,445 958,442.5 V419 Q958,417 960,417 Z" fill="#7F7F7F"/><rect x="962.4" y="417" width="1.2" height="24.4" fill="#fff"/><path d="M960.6,441.4 H982 V443.8 H960.6 A1.2,1.2 0 0 1 960.6,441.4 Z" fill="#fff"/><polygon points="978,432 986,446 970,446" fill="#EDC37F" stroke="#fff" stroke-width="1"/><rect x="977.3" y="436" width="1.6" height="5.5" fill="#444"/><rect x="977.3" y="442.8" width="1.6" height="1.6" fill="#444"/><path d="M960,465 H982 V493 H960.5 Q958,493 958,490.5 V467 Q958,465 960,465 Z" fill="#E88D47"/><rect x="962.4" y="465" width="1.2" height="24.4" fill="#fff"/><path d="M960.6,489.4 H982 V491.8 H960.6 A1.2,1.2 0 0 1 960.6,489.4 Z" fill="#fff"/><circle cx="978.7" cy="487" r="7.2" fill="#fff" stroke="#4A7EBB" stroke-width="1.3"/><g stroke="#4A7EBB" stroke-width="0.9" fill="none"><ellipse cx="978.7" cy="487" rx="3.2" ry="7.2"/><line x1="971.5" y1="487" x2="986" y2="487"/><line x1="972.5" y1="483.5" x2="985" y2="483.5"/><line x1="972.5" y1="490.5" x2="985" y2="490.5"/></g><polygon points="1171,230.7 1179.3,238.2 1171,245.7" fill="#262626" /><polygon points="1171,278.8 1179.3,286.3 1171,293.8" fill="#262626" /><polygon points="1171,326.9 1179.3,334.4 1171,341.9" fill="#262626" /><polygon points="1171,375.0 1179.3,382.5 1171,390.0" fill="#262626" /><polygon points="1171,423.1 1179.3,430.6 1171,438.1" fill="#262626" /><polygon points="1171,471.2 1179.3,478.7 1171,486.2" fill="#262626" /><rect x="1009.3" y="250.5" width="13.0" height="1.4" fill="#000"/><rect x="1009.3" y="298.6" width="12.200000000000045" height="1.4" fill="#000"/><rect x="1009.3" y="346.8" width="14.700000000000045" height="1.4" fill="#000"/><rect x="1009.3" y="394.8" width="4.7000000000000455" height="1.4" fill="#000"/><rect x="1009.3" y="442.8" width="14.700000000000045" height="1.4" fill="#000"/><rect x="1009.3" y="490.8" width="21.700000000000045" height="1.4" fill="#000"/></svg>
<div class="t" style="left:1008.52px;top:229.00px;font-size:24px;color:#000000;font-weight:400;z-index:25;transform:scaleX(0.9820);">Statistical</div>
<div class="t" style="left:1007.48px;top:277.00px;font-size:24px;color:#000000;font-weight:400;z-index:25;transform:scaleX(1.0112);">Engineering</div>
<div class="t" style="left:1008.51px;top:325.00px;font-size:24px;color:#000000;font-weight:400;z-index:25;transform:scaleX(0.9945);">Cube</div>
<div class="t" style="left:1007.39px;top:373.00px;font-size:24px;color:#1b1f0a;font-weight:400;z-index:25;transform:scaleX(1.0547);">Information</div>
<div class="t" style="left:1008.47px;top:421.00px;font-size:24px;color:#000000;font-weight:400;z-index:25;transform:scaleX(1.0277);">Compatibility</div>
<div class="t" style="left:1009.50px;top:469.00px;font-size:24px;color:#000000;font-weight:400;z-index:25;transform:scaleX(0.9896);">Web</div>
<div class="b" style="left:1196px;top:359.5px;width:290px;height:1000px;background:#fff;border:2px solid #8F8F8F;border-radius:7px;box-sizing:border-box;box-shadow:0 6px 16px rgba(0,0,0,0.12);z-index:30"></div>
<div class="b" style="left:1200.5px;top:987px;width:282.5px;height:47.5px;background:#7A9A30;border-left:1px solid #B8B8B8;border-top:1px solid #C8C8C8;box-sizing:border-box;z-index:31"></div>
<div class="b" style="left:1200.5px;top:1323px;width:282px;height:2px;background:#D7DDE2;z-index:31"></div>
<svg width="1787" height="1327" style="z-index:32"><defs><linearGradient id="ag" x1="0" y1="0" x2="0" y2="1"><stop offset="0" stop-color="#F2F7F7"/><stop offset="0.45" stop-color="#7FA4A8"/><stop offset="1" stop-color="#0E4B52"/></linearGradient></defs><polygon points="1433.8,855.5 1446.5,960 1454.5,960 1434.6,983.5 1414.6,960 1422.3,960" fill="url(#ag)"/></svg>
<div class="t" style="left:1262.64px;top:379.00px;font-size:22.5px;color:#555555;font-weight:400;z-index:35;transform:scaleX(0.8564);">CELL</div>
<div class="t" style="left:1261.75px;top:427.00px;font-size:22.5px;color:#555555;font-weight:400;z-index:35;transform:scaleX(0.8750);">ERROR.TYPE</div>
<div class="t" style="left:1261.48px;top:475.00px;font-size:22.5px;color:#555555;font-weight:400;z-index:35;transform:scaleX(1.0078);">INFO</div>
<div class="t" style="left:1261.59px;top:523.00px;font-size:22.5px;color:#555555;font-weight:400;z-index:35;transform:scaleX(0.9570);">ISBLANK</div>
<div class="t" style="left:1261.78px;top:571.00px;font-size:22.5px;color:#555555;font-weight:400;z-index:35;transform:scaleX(0.8591);">ISERR</div>
<div class="t" style="left:1261.71px;top:619.00px;font-size:22.5px;color:#555555;font-weight:400;z-index:35;transform:scaleX(0.8970);">ISERROR</div>
<div class="t" style="left:1261.65px;top:667.00px;font-size:22.5px;color:#555555;font-weight:400;z-index:35;transform:scaleX(0.9266);">ISEVEN</div>
<div class="t" style="left:1261.56px;top:715.00px;font-size:22.5px;color:#555555;font-weight:400;z-index:35;transform:scaleX(0.9690);">ISFORMULA</div>
<div class="t" style="left:1261.61px;top:763.00px;font-size:22.5px;color:#555555;font-weight:400;z-index:35;transform:scaleX(0.9431);">ISLOGICAL</div>
<div class="t" style="left:1261.50px;top:811.00px;font-size:22.5px;color:#555555;font-weight:400;z-index:35;">ISNA</div>
<div class="t" style="left:1261.56px;top:859.00px;font-size:22.5px;color:#555555;font-weight:400;z-index:35;transform:scaleX(0.9722);">ISNONTEXT</div>
<div class="t" style="left:1261.55px;top:907.00px;font-size:22.5px;color:#555555;font-weight:400;z-index:35;transform:scaleX(0.9741);">ISNUMBER</div>
<div class="t" style="left:1261.49px;top:955.00px;font-size:22.5px;color:#555555;font-weight:400;z-index:35;transform:scaleX(1.0059);">ISODD</div>
<div class="t" style="left:1261.78px;top:1003.00px;font-size:22.5px;color:#1f2410;font-weight:400;z-index:35;transform:scaleX(0.8578);">ISREF</div>
<div class="t" style="left:1261.64px;top:1051.00px;font-size:22.5px;color:#555555;font-weight:400;z-index:35;transform:scaleX(0.9276);">ISTEXT</div>
<div class="t" style="left:1261.24px;top:1099.00px;font-size:22.5px;color:#555555;font-weight:400;z-index:35;transform:scaleX(1.1308);">N</div>
<div class="t" style="left:1261.40px;top:1147.00px;font-size:22.5px;color:#555555;font-weight:400;z-index:35;transform:scaleX(1.0517);">NA</div>
<div class="t" style="left:1262.76px;top:1195.00px;font-size:22.5px;color:#555555;font-weight:400;z-index:35;transform:scaleX(0.7365);">SHEET</div>
<div class="t" style="left:1262.71px;top:1243.00px;font-size:22.5px;color:#555555;font-weight:400;z-index:35;transform:scaleX(0.7898);">SHEETS</div>
<div class="t" style="left:1263.50px;top:1291.00px;font-size:22.5px;color:#555555;font-weight:400;z-index:35;transform:scaleX(0.8414);">TYPE</div>
<div class="b" style="left:1281.8px;top:1051.5px;width:427.7px;height:237px;background:#fff;border:2px solid #8C8C8C;border-radius:8px;box-sizing:border-box;box-shadow:5px 9px 20px rgba(0,0,0,0.15);z-index:40"></div>
<div class="b" style="left:1292px;top:1224.5px;width:408px;height:1px;background:#DCDCDC;z-index:41"></div>
<svg width="1787" height="1327" style="z-index:42"><circle cx="1319.5" cy="1256.2" r="13.5" fill="#4A7EBB"/><text x="1319.5" y="1265" font-family="Liberation Sans" font-weight="700" font-size="25" fill="#fff" text-anchor="middle">?</text></svg>
<div class="t" style="left:1304.08px;top:1072.00px;font-size:24px;color:#555555;font-weight:700;z-index:45;transform:scaleX(0.9586);">ISREF(value)</div>
<div class="t" style="left:1304.52px;top:1123.00px;font-size:24px;color:#555555;font-weight:400;z-index:45;transform:scaleX(0.9789);">Checks whether a value is a</div>
<div class="t" style="left:1303.55px;top:1155.00px;font-size:24px;color:#555555;font-weight:400;z-index:45;transform:scaleX(0.9763);">reference, and returns TRUE or</div>
<div class="t" style="left:1303.76px;top:1186.00px;font-size:24px;color:#555555;font-weight:400;z-index:45;transform:scaleX(0.8688);">FALSE.</div>
<div class="t" style="left:1351.00px;top:1248.00px;font-size:24.5px;color:#2E5D98;font-weight:700;z-index:45;">Tell me more</div>
</body></html>
